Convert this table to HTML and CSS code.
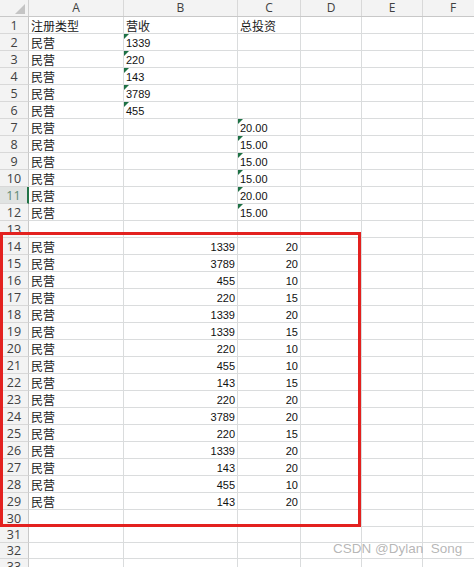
FILE: index.html
```html
<!DOCTYPE html>
<html>
<head>
<meta charset="utf-8">
<link rel="stylesheet" href="styles.css">
</head>
<body>
<div class="sheet">
  <div class="row colhead"><div class="corner"></div><div class="ch">A</div><div class="ch">B</div><div class="ch">C</div><div class="ch">D</div><div class="ch">E</div><div class="ch">F</div></div>
  <div class="row"><div class="rh">1</div><div class="c">注册类型</div><div class="c">营收</div><div class="c">总投资</div><div class="c"></div><div class="c"></div><div class="c"></div></div>
  <div class="row"><div class="rh">2</div><div class="c">民营</div><div class="c n flag">1339</div><div class="c"></div><div class="c"></div><div class="c"></div><div class="c"></div></div>
  <div class="row"><div class="rh">3</div><div class="c">民营</div><div class="c n flag">220</div><div class="c"></div><div class="c"></div><div class="c"></div><div class="c"></div></div>
  <div class="row"><div class="rh">4</div><div class="c">民营</div><div class="c n flag">143</div><div class="c"></div><div class="c"></div><div class="c"></div><div class="c"></div></div>
  <div class="row"><div class="rh">5</div><div class="c">民营</div><div class="c n flag">3789</div><div class="c"></div><div class="c"></div><div class="c"></div><div class="c"></div></div>
  <div class="row"><div class="rh">6</div><div class="c">民营</div><div class="c n flag">455</div><div class="c"></div><div class="c"></div><div class="c"></div><div class="c"></div></div>
  <div class="row"><div class="rh">7</div><div class="c">民营</div><div class="c"></div><div class="c n flag">20.00</div><div class="c"></div><div class="c"></div><div class="c"></div></div>
  <div class="row"><div class="rh">8</div><div class="c">民营</div><div class="c"></div><div class="c n flag">15.00</div><div class="c"></div><div class="c"></div><div class="c"></div></div>
  <div class="row"><div class="rh">9</div><div class="c">民营</div><div class="c"></div><div class="c n flag">15.00</div><div class="c"></div><div class="c"></div><div class="c"></div></div>
  <div class="row"><div class="rh">10</div><div class="c">民营</div><div class="c"></div><div class="c n flag">15.00</div><div class="c"></div><div class="c"></div><div class="c"></div></div>
  <div class="row"><div class="rh sel">11</div><div class="c">民营</div><div class="c"></div><div class="c n flag">20.00</div><div class="c"></div><div class="c"></div><div class="c"></div></div>
  <div class="row"><div class="rh">12</div><div class="c">民营</div><div class="c"></div><div class="c n flag">15.00</div><div class="c"></div><div class="c"></div><div class="c"></div></div>
  <div class="row"><div class="rh">13</div><div class="c"></div><div class="c"></div><div class="c"></div><div class="c"></div><div class="c"></div><div class="c"></div></div>
  <div class="row"><div class="rh">14</div><div class="c">民营</div><div class="c n r">1339</div><div class="c n r">20</div><div class="c"></div><div class="c"></div><div class="c"></div></div>
  <div class="row"><div class="rh">15</div><div class="c">民营</div><div class="c n r">3789</div><div class="c n r">20</div><div class="c"></div><div class="c"></div><div class="c"></div></div>
  <div class="row"><div class="rh">16</div><div class="c">民营</div><div class="c n r">455</div><div class="c n r">10</div><div class="c"></div><div class="c"></div><div class="c"></div></div>
  <div class="row"><div class="rh">17</div><div class="c">民营</div><div class="c n r">220</div><div class="c n r">15</div><div class="c"></div><div class="c"></div><div class="c"></div></div>
  <div class="row"><div class="rh">18</div><div class="c">民营</div><div class="c n r">1339</div><div class="c n r">20</div><div class="c"></div><div class="c"></div><div class="c"></div></div>
  <div class="row"><div class="rh">19</div><div class="c">民营</div><div class="c n r">1339</div><div class="c n r">15</div><div class="c"></div><div class="c"></div><div class="c"></div></div>
  <div class="row"><div class="rh">20</div><div class="c">民营</div><div class="c n r">220</div><div class="c n r">10</div><div class="c"></div><div class="c"></div><div class="c"></div></div>
  <div class="row"><div class="rh">21</div><div class="c">民营</div><div class="c n r">455</div><div class="c n r">10</div><div class="c"></div><div class="c"></div><div class="c"></div></div>
  <div class="row"><div class="rh">22</div><div class="c">民营</div><div class="c n r">143</div><div class="c n r">15</div><div class="c"></div><div class="c"></div><div class="c"></div></div>
  <div class="row"><div class="rh">23</div><div class="c">民营</div><div class="c n r">220</div><div class="c n r">20</div><div class="c"></div><div class="c"></div><div class="c"></div></div>
  <div class="row"><div class="rh">24</div><div class="c">民营</div><div class="c n r">3789</div><div class="c n r">20</div><div class="c"></div><div class="c"></div><div class="c"></div></div>
  <div class="row"><div class="rh">25</div><div class="c">民营</div><div class="c n r">220</div><div class="c n r">15</div><div class="c"></div><div class="c"></div><div class="c"></div></div>
  <div class="row"><div class="rh">26</div><div class="c">民营</div><div class="c n r">1339</div><div class="c n r">20</div><div class="c"></div><div class="c"></div><div class="c"></div></div>
  <div class="row"><div class="rh">27</div><div class="c">民营</div><div class="c n r">143</div><div class="c n r">20</div><div class="c"></div><div class="c"></div><div class="c"></div></div>
  <div class="row"><div class="rh">28</div><div class="c">民营</div><div class="c n r">455</div><div class="c n r">10</div><div class="c"></div><div class="c"></div><div class="c"></div></div>
  <div class="row"><div class="rh">29</div><div class="c">民营</div><div class="c n r">143</div><div class="c n r">20</div><div class="c"></div><div class="c"></div><div class="c"></div></div>
  <div class="row"><div class="rh">30</div><div class="c"></div><div class="c"></div><div class="c"></div><div class="c"></div><div class="c"></div><div class="c"></div></div>
  <div class="row short"><div class="rh">31</div><div class="c"></div><div class="c"></div><div class="c"></div><div class="c"></div><div class="c"></div><div class="c"></div></div>
  <div class="row short"><div class="rh">32</div><div class="c"></div><div class="c"></div><div class="c"></div><div class="c"></div><div class="c"></div><div class="c"></div></div>
  <div class="row short"><div class="rh">33</div><div class="c"></div><div class="c"></div><div class="c"></div><div class="c"></div><div class="c"></div><div class="c"></div></div>
  <div class="highlight"></div>
  <div class="watermark">CSDN @Dylan&nbsp; Song</div>
</div>
</body>
</html>
```

FILE: styles.css
```css
html, body {
  margin: 0;
  padding: 0;
  background: #ffffff;
  overflow: hidden;
}

.sheet {
  position: relative;
  width: 484px;
  font-family: "Noto Sans CJK SC", "Liberation Sans", sans-serif;
  color: #1a1a1a;
}

.row {
  display: grid;
  grid-template-columns: 29px 95px 114px 63px 61px 61px 61px;
  height: 17px;
}

.row.short {
  height: 16px;
}

.row.short .rh {
  line-height: 15px;
}

.colhead {
  background: #f3f3f3;
  border-bottom: 1px solid #c8c8c8;
  box-sizing: border-box;
  height: 17px;
}

.corner {
  position: relative;
  border-right: 1px solid #d0d0d0;
}

.corner::after {
  content: "";
  position: absolute;
  right: 3px;
  bottom: 2px;
  width: 0;
  height: 0;
  border-left: 10px solid transparent;
  border-bottom: 10px solid #c4c4c4;
}

.ch {
  border-right: 1px solid #d8d8d8;
  text-align: center;
  font-family: "Open Sans", "Liberation Sans", sans-serif;
  font-size: 12px;
  line-height: 16px;
  color: #404040;
}

.rh {
  box-sizing: border-box;
  background: #f3f3f3;
  border-right: 1px solid #c8c8c8;
  border-bottom: 1px solid #d8d8d8;
  text-align: center;
  font-family: "Open Sans", "Liberation Sans", sans-serif;
  font-size: 12.5px;
  line-height: 17px;
  color: #404040;
  overflow: hidden;
}

.rh.sel {
  background: #e0e3e2;
  color: #5f8a74;
  border-right: 2px solid #217346;
}

.c {
  position: relative;
  box-sizing: border-box;
  border-right: 1px solid #dadcdd;
  border-bottom: 1px solid #dadcdd;
  padding: 0 2px;
  font-size: 12px;
  line-height: 17px;
  white-space: nowrap;
  overflow: hidden;
}

.n {
  font-family: "Liberation Sans", sans-serif;
  font-size: 11px;
  padding-top: 1px;
  line-height: 16px;
  color: #111;
}

.r {
  text-align: right;
  padding-right: 2px;
}

.flag::before {
  content: "";
  position: absolute;
  left: 0;
  top: 0;
  width: 0;
  height: 0;
  border-top: 5px solid #1e7145;
  border-right: 5px solid transparent;
}

.highlight {
  position: absolute;
  left: 0;
  top: 232px;
  width: 361px;
  height: 295px;
  box-sizing: border-box;
  border: 3px solid #e3211f;
  pointer-events: none;
}

.watermark {
  position: absolute;
  left: 333px;
  top: 541px;
  font-family: "Liberation Sans", sans-serif;
  font-size: 13.5px;
  color: rgba(120, 120, 120, 0.55);
  white-space: nowrap;
}
```
